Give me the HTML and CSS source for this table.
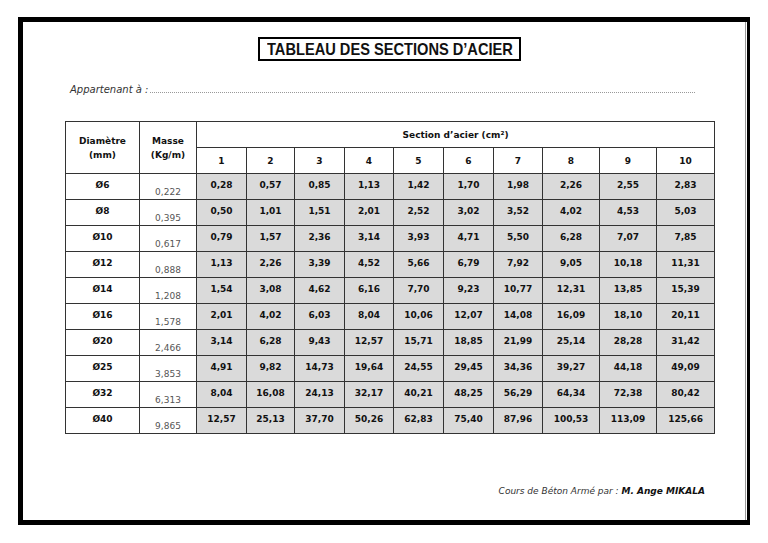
FILE: index.html
```html
<!DOCTYPE html>
<html lang="fr">
<head>
<meta charset="utf-8">
<title>Tableau des sections d'acier</title>
<link rel="stylesheet" href="styles.css">
</head>
<body>
<div class="page">
  <div class="title"><span class="title-text">TABLEAU DES SECTIONS D’ACIER</span></div>
  <div class="owner"><span class="owner-label">Appartenant à :</span><span class="dots"></span></div>
  <table class="steel">
    <colgroup>
      <col class="w-d"><col class="w-m">
      <col class="w-50"><col class="w-48"><col class="w-50"><col class="w-49"><col class="w-50"><col class="w-50"><col class="w-49"><col class="w-57"><col class="w-57"><col class="w-58">
    </colgroup>
    <thead>
      <tr>
        <th rowspan="2">Diamètre<br>(mm)</th>
        <th rowspan="2">Masse<br>(Kg/m)</th>
        <th colspan="10">Section d’acier (cm²)</th>
      </tr>
      <tr>
        <th>1</th><th>2</th><th>3</th><th>4</th><th>5</th><th>6</th><th>7</th><th>8</th><th>9</th><th>10</th>
      </tr>
    </thead>
    <tbody>
      <tr><th>Ø6</th><td class="m">0,222</td><td>0,28</td><td>0,57</td><td>0,85</td><td>1,13</td><td>1,42</td><td>1,70</td><td>1,98</td><td>2,26</td><td>2,55</td><td>2,83</td></tr>
      <tr><th>Ø8</th><td class="m">0,395</td><td>0,50</td><td>1,01</td><td>1,51</td><td>2,01</td><td>2,52</td><td>3,02</td><td>3,52</td><td>4,02</td><td>4,53</td><td>5,03</td></tr>
      <tr><th>Ø10</th><td class="m">0,617</td><td>0,79</td><td>1,57</td><td>2,36</td><td>3,14</td><td>3,93</td><td>4,71</td><td>5,50</td><td>6,28</td><td>7,07</td><td>7,85</td></tr>
      <tr><th>Ø12</th><td class="m">0,888</td><td>1,13</td><td>2,26</td><td>3,39</td><td>4,52</td><td>5,66</td><td>6,79</td><td>7,92</td><td>9,05</td><td>10,18</td><td>11,31</td></tr>
      <tr><th>Ø14</th><td class="m">1,208</td><td>1,54</td><td>3,08</td><td>4,62</td><td>6,16</td><td>7,70</td><td>9,23</td><td>10,77</td><td>12,31</td><td>13,85</td><td>15,39</td></tr>
      <tr><th>Ø16</th><td class="m">1,578</td><td>2,01</td><td>4,02</td><td>6,03</td><td>8,04</td><td>10,06</td><td>12,07</td><td>14,08</td><td>16,09</td><td>18,10</td><td>20,11</td></tr>
      <tr><th>Ø20</th><td class="m">2,466</td><td>3,14</td><td>6,28</td><td>9,43</td><td>12,57</td><td>15,71</td><td>18,85</td><td>21,99</td><td>25,14</td><td>28,28</td><td>31,42</td></tr>
      <tr><th>Ø25</th><td class="m">3,853</td><td>4,91</td><td>9,82</td><td>14,73</td><td>19,64</td><td>24,55</td><td>29,45</td><td>34,36</td><td>39,27</td><td>44,18</td><td>49,09</td></tr>
      <tr><th>Ø32</th><td class="m">6,313</td><td>8,04</td><td>16,08</td><td>24,13</td><td>32,17</td><td>40,21</td><td>48,25</td><td>56,29</td><td>64,34</td><td>72,38</td><td>80,42</td></tr>
      <tr><th>Ø40</th><td class="m">9,865</td><td>12,57</td><td>25,13</td><td>37,70</td><td>50,26</td><td>62,83</td><td>75,40</td><td>87,96</td><td>100,53</td><td>113,09</td><td>125,66</td></tr>
    </tbody>
  </table>
  <div class="footer">Cours de Béton Armé par : <b>M. Ange MIKALA</b></div>
</div>
</body>
</html>
```
FILE: styles.css
```css
html, body {
  margin: 0;
  background: #fff;
}
.page {
  margin: 17px 0 0 18px;
  width: 732px;
  height: 508px;
  box-sizing: border-box;
  border: 5px solid #000;
  border-right-width: 3px;
  box-shadow: inset -1px 0 0 #fff, inset -2px 0 0 #999;
  padding: 15px 0 0 0;
  display: flex;
  flex-direction: column;
}
.title {
  align-self: flex-start;
  margin-left: 235px;
  width: 263px;
  height: 24px;
  box-sizing: border-box;
  border: 2px solid #000;
  display: flex;
  justify-content: center;
  align-items: center;
  overflow: hidden;
}
.title-text {
  display: inline-block;
  white-space: nowrap;
  font-family: "Liberation Sans", Arial, sans-serif;
  font-weight: bold;
  font-size: 17px;
  line-height: 19px;
  color: #111;
  transform: scaleX(0.86);
}
.owner {
  display: flex;
  align-items: baseline;
  margin: 23px 52px 0 47px;
  font-family: "DejaVu Sans", sans-serif;
  font-style: italic;
  font-size: 10px;
  color: #333;
}
.owner-label {
  white-space: pre;
  padding-right: 2px;
}
.dots {
  flex: 1;
  border-bottom: 1px dotted #999;
}
.steel {
  margin: 26px 0 0 42px;
  width: 649px;
  table-layout: fixed;
  border-collapse: collapse;
  font-family: "DejaVu Sans", sans-serif;
  font-size: 9px;
  color: #111;
}
.w-d { width: 74px; }
.w-m { width: 57px; }
.w-48 { width: 48px; }
.w-49 { width: 49px; }
.w-50 { width: 50px; }
.w-57 { width: 57px; }
.w-58 { width: 58px; }
.steel tr {
  height: 26px;
}
.steel th,
.steel td {
  border: 1px solid #333;
  padding: 0;
  text-align: center;
  vertical-align: middle;
  font-weight: bold;
  line-height: 12px;
}
.steel thead th {
  background: #fff;
  line-height: 14px;
}
.steel tbody th {
  background: #fff;
  padding-bottom: 3px;
}
.steel tbody td {
  background: #dadada;
  padding-bottom: 3px;
}
.steel tbody td.m {
  background: #fff;
  font-weight: normal;
  color: #555;
  vertical-align: bottom;
  padding-bottom: 1px;
  font-size: 9px;
}
.footer {
  margin: 52px 42px 0 0;
  text-align: right;
  font-family: "DejaVu Sans", sans-serif;
  font-style: italic;
  font-size: 9px;
  color: #333;
}
.footer b {
  color: #111;
}
```
